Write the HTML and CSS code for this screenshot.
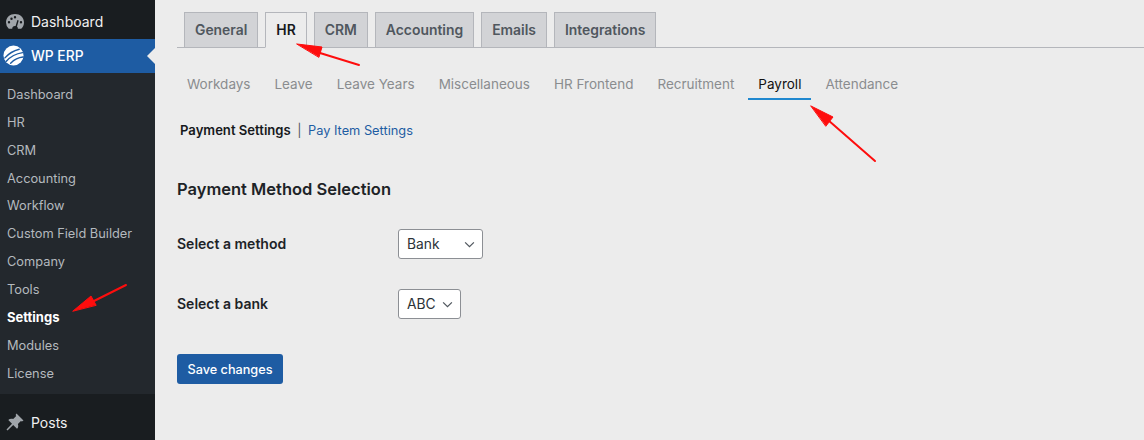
FILE: index.html
```html
<!DOCTYPE html>
<html lang="en">
<head>
<meta charset="utf-8">
<title>WP ERP Settings</title>
<link rel="stylesheet" href="styles.css">
</head>
<body>
<div class="page">
  <aside class="sidebar">
    <a class="top-item">
      <svg class="menu-icon" viewBox="0 0 20 20"><path fill="#a0a5aa" fill-rule="evenodd" d="M3.8 16.8A8.9 8.9 0 0 1 1 10.4C1 5.5 5 2 10 2s9 3.5 9 8.4c0 2.5-1 4.7-2.800 6.400h-3.300a3 3 0 0 0-.9-2.300l1.700-6-1.300-.4-1.800 5.900a3 3 0 0 0-3.400 2.800zM4 9a1.200 1.200 0 1 0 0 2.400A1.200 1.200 0 0 0 4 9zm2.500-3.500a1.200 1.200 0 1 0 0 2.400 1.200 1.200 0 0 0 0-2.400zM10 4a1.200 1.200 0 1 0 0 2.400A1.200 1.200 0 0 0 10 4zm6 5a1.200 1.200 0 1 0 0 2.400A1.200 1.200 0 0 0 16 9z"/></svg>
      <span>Dashboard</span>
    </a>
    <a class="top-item current">
      <svg class="logo-icon" viewBox="0 0 22 22"><circle cx="11" cy="11" r="10.500" fill="#fff"/><path d="M2 13.500C6 9 11 6 17 4.500M3.500 17C8 12 14 9 20.500 8M8 19C12 15 16 13 21 12.500" fill="none" stroke="#1e5ca3" stroke-width="1.500" stroke-linecap="round"/></svg>
      <span>WP ERP</span>
    </a>
    <nav class="submenu">
      <a>Dashboard</a>
      <a>HR</a>
      <a>CRM</a>
      <a>Accounting</a>
      <a>Workflow</a>
      <a>Custom Field Builder</a>
      <a>Company</a>
      <a>Tools</a>
      <a class="active">Settings</a>
      <a>Modules</a>
      <a>License</a>
    </nav>
    <a class="top-item">
      <svg class="menu-icon" viewBox="0 0 20 20"><path fill="#a0a5aa" d="M11.500 1.500l7 7-1.600 1-1-.6-3 3c.7 2 .3 3.700-.9 4.900L8.200 13l-5.700 5.500-1-1L7 11.800 3.300 8c1.200-1.200 3-1.600 4.900-.9l3-3-.6-1z"/></svg>
      <span>Posts</span>
    </a>
  </aside>

  <main class="content">
    <div class="tabs">
      <a class="tab">General</a>
      <a class="tab selected">HR</a>
      <a class="tab">CRM</a>
      <a class="tab">Accounting</a>
      <a class="tab">Emails</a>
      <a class="tab">Integrations</a>
    </div>
    <div class="subtabs">
      <a>Workdays</a>
      <a>Leave</a>
      <a>Leave Years</a>
      <a>Miscellaneous</a>
      <a>HR Frontend</a>
      <a>Recruitment</a>
      <a class="on">Payroll</a>
      <a>Attendance</a>
    </div>
    <div class="links">
      <strong>Payment Settings</strong>
      <span class="sep">|</span>
      <a>Pay Item Settings</a>
    </div>
    <h2>Payment Method Selection</h2>
    <div class="field method">
      <label>Select a method</label>
      <div class="select wide"><span>Bank</span><svg viewBox="0 0 12 8"><path d="M1 1.500l5 5 5-5" fill="none" stroke="#50575e" stroke-width="1.400"/></svg></div>
    </div>
    <div class="field bank">
      <label>Select a bank</label>
      <div class="select"><span>ABC</span><svg viewBox="0 0 12 8"><path d="M1 1.500l5 5 5-5" fill="none" stroke="#50575e" stroke-width="1.400"/></svg></div>
    </div>
    <button class="save">Save changes</button>
  </main>

  <svg class="arrows" viewBox="0 0 1144 440">
    <g fill="#fe0d0d" stroke="#fe0d0d" stroke-linecap="round">
      <path d="M359 65L320 53" stroke-width="2" fill="none"/>
      <path d="M297 44L322 47L319 57Z" stroke-width="1"/>
      <path d="M875 161L828 120" stroke-width="2" fill="none"/>
      <path d="M811 106L833 117L826 126Z" stroke-width="1"/>
      <path d="M126 285L94 301" stroke-width="2" fill="none"/>
      <path d="M73 311L91 296L96 305Z" stroke-width="1"/>
    </g>
  </svg>
</div>
</body>
</html>
```
FILE: styles.css
```css
* { box-sizing: border-box; }
html, body { margin: 0; padding: 0; height: 100%; overflow: hidden; }
body { background: #ececec; color: #1d2327; font-family: Inter, "Liberation Sans", sans-serif; font-size: 13px; }
.page { position: relative; display: flex; width: 1144px; height: 440px; overflow: hidden; }

.sidebar { width: 155px; flex: none; background: #191d20; display: flex; flex-direction: column; padding-top: 5px; }
.top-item { display: flex; align-items: center; height: 34px; color: #f0f0f1; font-size: 14px; font-weight: 400; padding-left: 5px; }
.top-item span { margin-left: 6px; }
.menu-icon { width: 20px; height: 20px; flex: none; }
.top-item.current { position: relative; background: #1e5ca3; color: #fff; font-weight: 500; padding-left: 3px; }
.top-item.current span { margin-left: 7px; font-size: 13.800px; }
.top-item.current::after { content: ""; position: absolute; right: 0; top: 9px; border: 8px solid transparent; border-right-color: #ececec; border-left-width: 0; }
.logo-icon { width: 21px; height: 21px; flex: none; }
.submenu { display: flex; flex-direction: column; background: #23282d; height: 322px; padding-top: 8px; }
.submenu a { display: block; height: 27.900px; line-height: 27.900px; padding-left: 7px; color: #b4b9be; font-size: 12.800px; }
.submenu a.active { color: #fff; font-weight: 700; font-size: 13px; }
.sidebar > .top-item:last-child { margin-top: 10px; height: 36px; }

.content { flex: 1; min-width: 0; padding: 12px 0 0 22px; }
.tabs { display: flex; gap: 7px; padding-left: 7px; height: 36px; border-bottom: 1px solid #b4b6bb; }
.tab { display: flex; align-items: center; justify-content: center; height: 36px; padding: 0 10px 1px; background: #d2d3d6; border: 1px solid #b4b6bb; color: #50575e; font-size: 13.900px; font-weight: 600; }
.tab.selected { background: #ececec; border-bottom-color: #ececec; color: #16191c; }

.subtabs { display: flex; gap: 4px; padding-left: 0; margin-top: 14px; height: 38px; }
.subtabs a { display: block; padding: 0 10px; height: 38px; line-height: 44px; color: #8a8c8f; font-size: 13.500px; }
.subtabs a.on { color: #111; border-bottom: 2px solid #2088cf; }

.links { display: flex; align-items: center; gap: 6.500px; margin-top: 21px; padding-left: 3px; height: 18px; font-size: 12.800px; }
.links strong { color: #16191c; font-weight: 600; font-size: 13.100px; }
.links .sep { color: #50575e; }
.links a { color: #1e5ca3; }

h2 { margin: 39px 0 0; font-size: 16.500px; line-height: 22px; font-weight: 600; color: #1d2327; }

.field { display: flex; align-items: center; height: 30px; }
.field.method { margin-top: 29px; }
.field.bank { margin-top: 30px; }
.field label { width: 221px; padding-bottom: 1px; font-weight: 600; font-size: 14px; color: #1d2327; }
.select { display: flex; align-items: center; justify-content: space-between; height: 30px; gap: 6px; background: #fff; border: 1px solid #8c8f94; border-radius: 3px; padding: 0 7px 0 8px; font-size: 13.800px; color: #2c3338; }
.select.wide { width: 85px; }
.select svg { width: 11px; height: 7px; flex: none; }

.save { display: block; margin-top: 35px; width: 106px; height: 30px; padding: 0; border: 0; border-radius: 3px; background: #1e5ca3; color: #fff; font: 500 12.700px Inter, "Liberation Sans", sans-serif; }

.arrows { position: absolute; left: 0; top: 0; width: 1144px; height: 440px; pointer-events: none; }
```
